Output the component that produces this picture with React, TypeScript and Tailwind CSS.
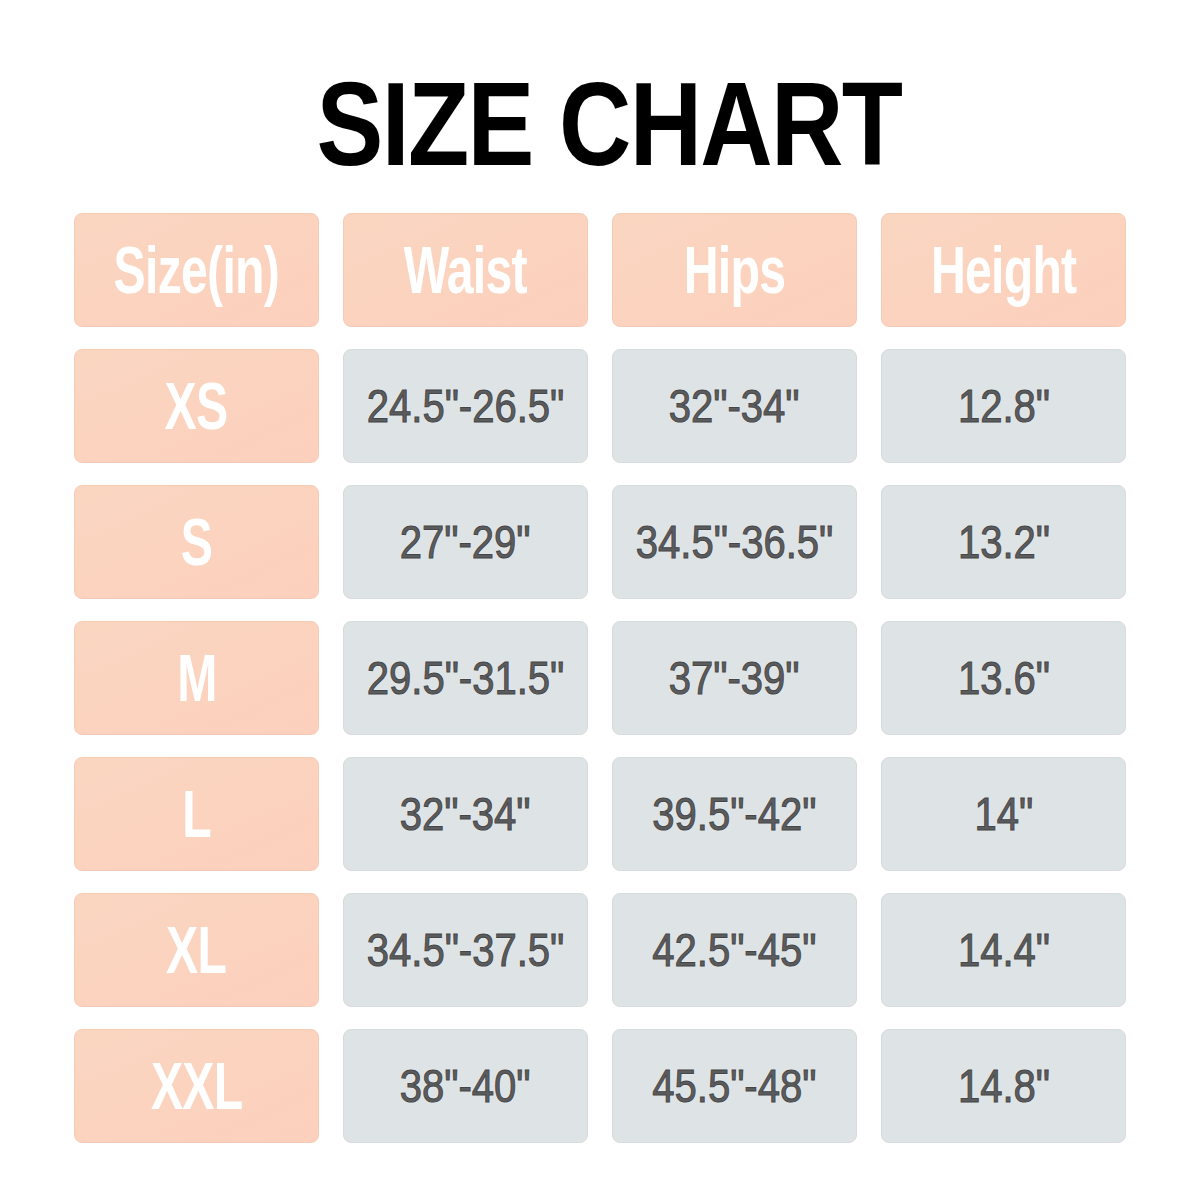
import React from "react";

const headers = ["Size(in)", "Waist", "Hips", "Height"];

const rows = [
  { size: "XS", waist: '24.5"-26.5"', hips: '32"-34"', height: '12.8"' },
  { size: "S", waist: '27"-29"', hips: '34.5"-36.5"', height: '13.2"' },
  { size: "M", waist: '29.5"-31.5"', hips: '37"-39"', height: '13.6"' },
  { size: "L", waist: '32"-34"', hips: '39.5"-42"', height: '14"' },
  { size: "XL", waist: '34.5"-37.5"', hips: '42.5"-45"', height: '14.4"' },
  { size: "XXL", waist: '38"-40"', hips: '45.5"-48"', height: '14.8"' },
];

const PeachCell: React.FC<{ label: string }> = ({ label }) => (
  <div className="h-[114px] rounded-lg bg-gradient-to-br from-[#fad6c1] to-[#fcd0bc] border border-[#f6cbb5] flex items-center justify-center overflow-hidden">
    <span className="inline-block scale-x-[0.73] text-white text-[66px] leading-none font-bold tracking-[-1px]">
      {label}
    </span>
  </div>
);

const GrayCell: React.FC<{ value: string }> = ({ value }) => (
  <div className="h-[114px] rounded-lg bg-[#dee3e5] border border-[#d6dbdd] flex items-center justify-center overflow-hidden">
    <span className="inline-block scale-x-[0.87] text-[46px] leading-none text-[#5b5c5e] [-webkit-text-stroke:1px_#444546] [text-shadow:0_0_2px_#ffffff]">
      {value}
    </span>
  </div>
);

export default function App() {
  return (
    <div className="w-[1200px] h-[1200px] bg-white font-['Liberation_Sans',Arial,sans-serif]">
      <div className="pt-[65px] pl-[18px] flex justify-center">
        <h1 className="inline-block scale-x-[0.85] text-[118px] leading-none font-bold text-black tracking-[-2px]">
          SIZE CHART
        </h1>
      </div>
      <div className="mt-[30px] px-[74px] grid grid-cols-4 gap-x-[24px] gap-y-[22px]">
        {headers.map((h) => (
          <PeachCell key={h} label={h} />
        ))}
        {rows.map((r) => (
          <React.Fragment key={r.size}>
            <PeachCell label={r.size} />
            <GrayCell value={r.waist} />
            <GrayCell value={r.hips} />
            <GrayCell value={r.height} />
          </React.Fragment>
        ))}
      </div>
    </div>
  );
}
